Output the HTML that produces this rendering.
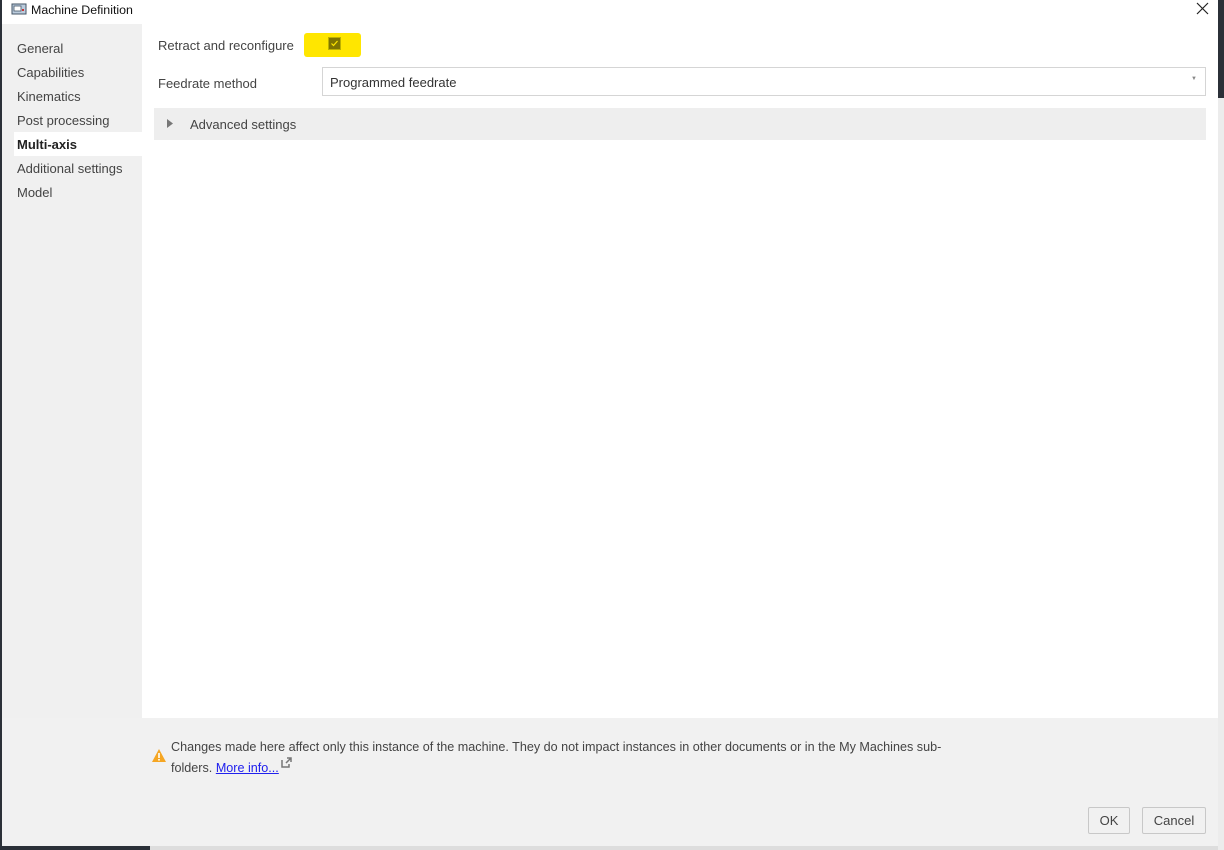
<!DOCTYPE html>
<html><head><meta charset="utf-8"><style>
*{box-sizing:border-box;margin:0;padding:0}
body{width:1224px;height:850px;background:#2b3038;font-family:"Liberation Sans",sans-serif;font-size:13px;color:#3c3c3c;position:relative;overflow:hidden}
.dlg{position:absolute;left:2px;top:0;width:1216px;height:846px;background:#f1f1f1}
.title{position:absolute;left:0;top:0;width:1216px;height:24px;background:#fff}
.title span{position:absolute;left:29px;top:3px;font-size:12.4px;color:#111}
.side{position:absolute;left:0;top:24px;width:140px;height:694px;background:#f0f0f0}
.side div{position:absolute;left:15px;font-size:13px;color:#444}
.sel{position:absolute;left:12px;top:108px;width:128px;height:24px;background:#fff}
.main{position:absolute;left:140px;top:24px;width:1076px;height:694px;background:#fff}
.lbl{position:absolute;font-size:13px;color:#444}
.right{position:absolute;left:1218px;top:0;width:6px;height:850px;background:#ececec}
.bottom{position:absolute;left:150px;top:846px;width:1068px;height:4px;background:#ddd}
.btn{position:absolute;top:807px;height:27px;border:1px solid #c8c8c8;border-radius:2px;background:#f1f1f1;font-size:13px;color:#444;text-align:center;line-height:25px}
</style></head><body>
<div class="right">
<div style="position:absolute;top:0;left:0;width:6px;height:98px;background:#2b3038"></div>
</div>
<div class="bottom"></div>
<div class="dlg">
 <div class="title">
  <svg style="position:absolute;left:9px;top:3px" width="16" height="13" viewBox="0 0 16 13"><rect x="1" y="1" width="14" height="10" fill="#bcd" stroke="#456" stroke-width="1"/><rect x="3" y="3" width="7" height="5" fill="#fff" stroke="#456" stroke-width=".8"/><rect x="11" y="6" width="2" height="2" fill="#c33"/></svg>
  <span>Machine Definition</span>
  <svg style="position:absolute;left:1194px;top:2px" width="13" height="13" viewBox="0 0 13 13"><path d="M1 1L12 12M12 1L1 12" stroke="#222" stroke-width="1.2"/></svg>
 </div>
 <div class="side">
  <div class="sel" style="left:12px"></div>
  <div style="top:17px">General</div>
  <div style="top:41px">Capabilities</div>
  <div style="top:65px">Kinematics</div>
  <div style="top:89px">Post processing</div>
  <div style="top:113px;font-weight:bold;color:#222">Multi-axis</div>
  <div style="top:137px">Additional settings</div>
  <div style="top:161px">Model</div>
 </div>
 <div class="main">
  <div class="lbl" style="left:16px;top:14px">Retract and reconfigure</div>
  <div style="position:absolute;left:162px;top:9px;width:57px;height:24px;background:#ffe600;border-radius:3px"></div>
  <div style="position:absolute;left:186px;top:13px;width:13px;height:13px;background:#7f7400;border:1px solid #bdb000"></div>
  <svg style="position:absolute;left:188px;top:15px" width="9" height="9" viewBox="0 0 9 9"><path d="M1.5 4.5L3.5 6.5L7.5 2" stroke="#ffe600" stroke-width="1.2" fill="none"/></svg>
  <div class="lbl" style="left:16px;top:52px">Feedrate method</div>
  <div style="position:absolute;left:180px;top:43px;width:884px;height:29px;border:1px solid #d5d5d5;background:#fff"><span style="position:absolute;left:7px;top:7px;color:#333">Programmed feedrate</span><span style="position:absolute;right:8px;top:8px;font-size:6px;color:#888">▼</span></div>
  <div style="position:absolute;left:12px;top:84px;width:1052px;height:32px;background:#eeeeee">
   <svg style="position:absolute;left:12px;top:10px" width="8" height="11" viewBox="0 0 8 11"><path d="M1 1L7 5.5L1 10Z" fill="#777"/></svg>
   <span style="position:absolute;left:36px;top:9px;color:#444">Advanced settings</span>
  </div>
 </div>
 <svg style="position:absolute;left:149px;top:748px" width="16" height="15" viewBox="0 0 16 15"><path d="M8 1L15 14H1Z" fill="#f5a623"/><rect x="7.2" y="5" width="1.6" height="5" fill="#fff"/><rect x="7.2" y="11" width="1.6" height="1.6" fill="#fff"/></svg>
 <div style="position:absolute;left:169px;top:737px;font-size:12.6px;line-height:20px;color:#444;width:800px">Changes made here affect only this instance of the machine. They do not impact instances in other documents or in the My Machines sub-<br>folders. <span style="color:#2020ee;text-decoration:underline">More info...</span><svg width="11" height="11" viewBox="0 0 11 11" style="vertical-align:4px;margin-left:2px"><path d="M1 3V10H8V7" stroke="#777" stroke-width="1.5" fill="none"/><path d="M5 6L10 1M6 1H10V5" stroke="#777" stroke-width="1.5" fill="none"/></svg></div>
 <div class="btn" style="left:1086px;width:42px">OK</div>
 <div class="btn" style="left:1140px;width:64px">Cancel</div>
</div>
</body></html>
